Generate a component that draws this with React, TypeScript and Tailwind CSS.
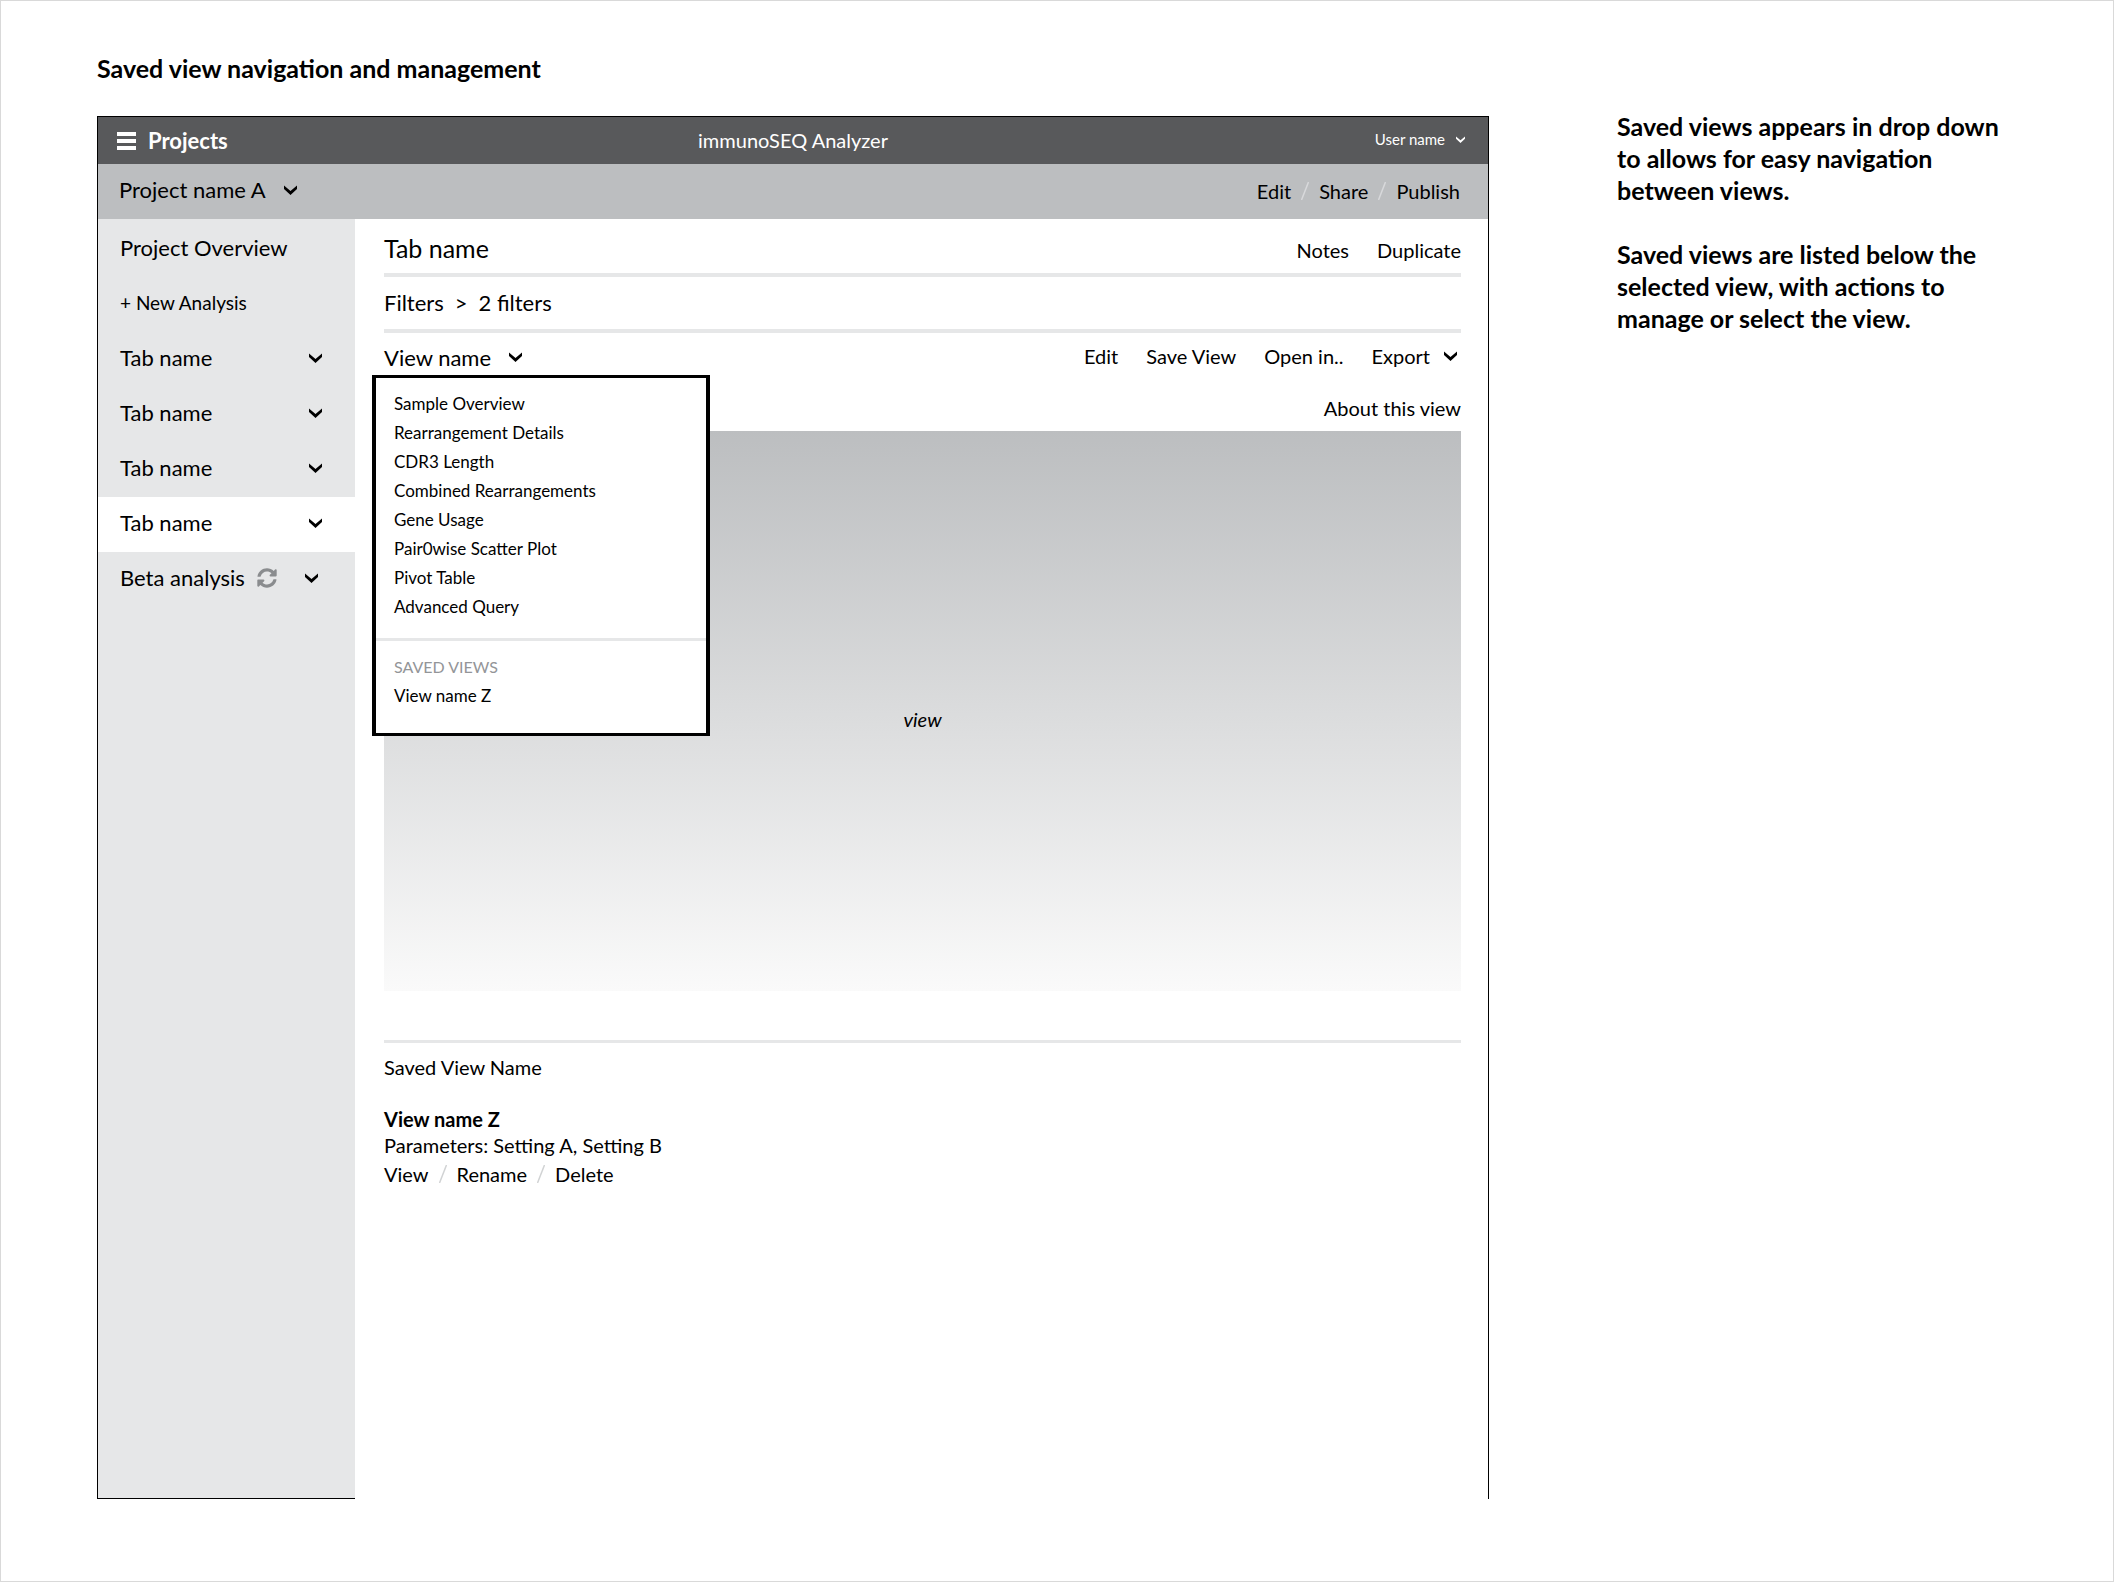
import { Fragment, useState } from "react";
import { FaSyncAlt } from "react-icons/fa";

const standardViews = [
  "Sample Overview",
  "Rearrangement Details",
  "CDR3 Length",
  "Combined Rearrangements",
  "Gene Usage",
  "Pair0wise Scatter Plot",
  "Pivot Table",
  "Advanced Query",
];

const savedViews = ["View name Z"];

const tabs = [
  { id: "tab-1", label: "Tab name" },
  { id: "tab-2", label: "Tab name" },
  { id: "tab-3", label: "Tab name" },
  { id: "tab-4", label: "Tab name" },
];

const Chevron = ({ small = false }: { small?: boolean }) => (
  <svg
    viewBox="0 0 13 10"
    className={small ? "w-[9px] h-[7px]" : "w-[13px] h-[10px]"}
    fill="currentColor"
    aria-hidden="true"
  >
    <path d="M0 0.5 L6.5 6 L13 0.5 V4 L6.5 10 L0 4 Z" />
  </svg>
);

const HamburgerIcon = () => (
  <svg viewBox="0 0 19 18" className="w-[19px] h-[18px]" fill="currentColor" aria-hidden="true">
    <path d="M0 0h19v4H0zM0 7h19v4H0zM0 14h19v4H0z" />
  </svg>
);

const Slash = ({ className }: { className: string }) => (
  <svg viewBox="0 0 8 18" className={`w-2 h-[18px] ${className}`} stroke="currentColor" aria-hidden="true">
    <path d="M7.5 0 L0.5 18" strokeWidth={1.5} />
  </svg>
);

const TopBar = () => (
  <header className="grid grid-cols-[1fr_auto_1fr] items-center h-[47px] px-[19px] bg-[#58595b] text-white">
    <button className="flex items-center gap-3 text-[22px] leading-6 font-bold justify-self-start">
      <HamburgerIcon />
      Projects
    </button>
    <span className="pb-0.5 text-[20px] leading-6">immunoSEQ Analyzer</span>
    <button className="flex items-center gap-[11px] pr-1 pb-0.5 text-[15px] justify-self-end" aria-haspopup="true">
      User name
      <Chevron small />
    </button>
  </header>
);

const ProjectBar = () => (
  <div className="flex items-center justify-between h-[55px] pl-[21px] pr-7 bg-[#bcbec0]">
    <button className="flex items-center gap-[18px] pb-1 text-[22px]" aria-haspopup="true">
      Project name A
      <Chevron />
    </button>
    <div className="flex items-center gap-[10px] pb-0.5 text-[20px]">
      {["Edit", "Share", "Publish"].map((action, i) => (
        <Fragment key={action}>
          {i > 0 && <Slash className="text-[#d8d9db]" />}
          <button>{action}</button>
        </Fragment>
      ))}
    </div>
  </div>
);

const Sidebar = () => {
  const [active, setActive] = useState("tab-4");

  return (
    <nav className="w-[257px] shrink-0 pt-[3px] bg-[#e6e7e8] border-b border-black text-[22px]">
      <a href="#overview" className="flex items-center h-[55px] pl-[22px] pb-1">
        Project Overview
      </a>
      <button className="flex items-center w-full h-[55px] pl-[22px] pb-0.5 text-[19px]">
        + New Analysis
      </button>
      {tabs.map((tab) => (
        <button
          key={tab.id}
          onClick={() => setActive(tab.id)}
          className={`flex items-center justify-between w-full h-[55px] pl-[22px] pr-[33px] pb-1 ${
            tab.id === active ? "bg-white" : ""
          }`}
        >
          {tab.label}
          <Chevron />
        </button>
      ))}
      <button className="flex items-center w-full h-[55px] pl-[22px] pb-1">
        Beta analysis
        <FaSyncAlt className="size-5 ml-3 text-[#8a8c8e]" />
        <span className="ml-7">
          <Chevron />
        </span>
      </button>
    </nav>
  );
};

const ViewMenu = () => (
  <div
    role="menu"
    className="absolute top-[42px] -left-3 w-[338px] h-[361px] bg-white border-x-4 border-y-3 border-black text-[17px]"
  >
    <ul className="pt-[11px] pl-[18px] pb-[17px]">
      {standardViews.map((view) => (
        <li key={view} className="h-[29px]">
          <button role="menuitem" className="leading-[29px]">{view}</button>
        </li>
      ))}
    </ul>
    <div className="border-t-3 border-[#e6e7e8] pt-[11px] pl-[18px]">
      <h3 className="text-[16px] leading-[29px] text-[#939598]">SAVED VIEWS</h3>
      <ul>
        {savedViews.map((view) => (
          <li key={view} className="h-[29px]">
            <button role="menuitem" className="leading-[29px]">{view}</button>
          </li>
        ))}
      </ul>
    </div>
  </div>
);

const ViewPanel = () => {
  const [menuOpen, setMenuOpen] = useState(true);

  return (
    <main className="flex-1 pl-[29px] pr-[27px] bg-white text-[20px]">
      <div className="flex items-baseline justify-between h-[58px] pt-[11px] border-b-4 border-[#e6e7e8]">
        <h2 className="text-[25px] leading-9">Tab name</h2>
        <div className="flex gap-7">
          <button>Notes</button>
          <button>Duplicate</button>
        </div>
      </div>

      <div className="flex items-center gap-[11px] h-14 pb-0.5 border-b-4 border-[#e6e7e8] text-[22px]">
        <span>Filters</span>
        <span>&gt;</span>
        <span>2 filters</span>
      </div>

      <div className="relative flex items-center justify-between h-[54px] pb-1">
        <button
          className="flex items-center gap-[18px] pb-0.5 text-[22px]"
          aria-haspopup="true"
          aria-expanded={menuOpen}
          onClick={() => setMenuOpen(!menuOpen)}
        >
          View name
          <Chevron />
        </button>
        <div className="flex gap-7 pr-1 pb-1">
          <button>Edit</button>
          <button>Save View</button>
          <button>Open in..</button>
          <button className="flex items-center gap-[14px]" aria-haspopup="true">
            Export
            <Chevron />
          </button>
        </div>
        {menuOpen && <ViewMenu />}
      </div>

      <div className="flex items-center justify-end h-[44px] pb-0.5">
        <a href="#about">About this view</a>
      </div>

      <div className="flex items-center justify-center h-[560px] pt-4 bg-linear-to-b from-[#bcbec0] to-[#fafafa] italic">
        view
      </div>

      <section className="mt-[49px] border-t-3 border-[#e6e7e8]">
        <h2 className="leading-[48px]">Saved View Name</h2>
        <h3 className="mt-[15px] leading-[26px] font-bold">View name Z</h3>
        <p className="leading-[26px]">Parameters: Setting A, Setting B</p>
        <div className="flex items-center gap-[10px] h-8">
          {["View", "Rename", "Delete"].map((action, i) => (
            <Fragment key={action}>
              {i > 0 && <Slash className="text-[#d1d3d4]" />}
              <button>{action}</button>
            </Fragment>
          ))}
        </div>
      </section>
    </main>
  );
};

export default function App() {
  return (
    <div className="flex flex-col min-h-screen px-24 pt-[51px] pb-[82px] bg-white border border-[#d9d9d9] font-['Lato',sans-serif] text-black">
      <h1 className="text-[25px] leading-8 font-bold">Saved view navigation and management</h1>
      <div className="flex flex-1 gap-32 mt-8">
        <div className="flex flex-col flex-1 border-x border-t border-black">
          <TopBar />
          <ProjectBar />
          <div className="flex flex-1">
            <Sidebar />
            <ViewPanel />
          </div>
        </div>
        <aside className="w-[400px] -mt-1.5 text-[25px] leading-8 font-bold">
          <p>Saved views appears in drop down to allows for easy navigation between views.</p>
          <p className="mt-8">
            Saved views are listed below the selected view, with actions to manage or select the view.
          </p>
        </aside>
      </div>
    </div>
  );
}
